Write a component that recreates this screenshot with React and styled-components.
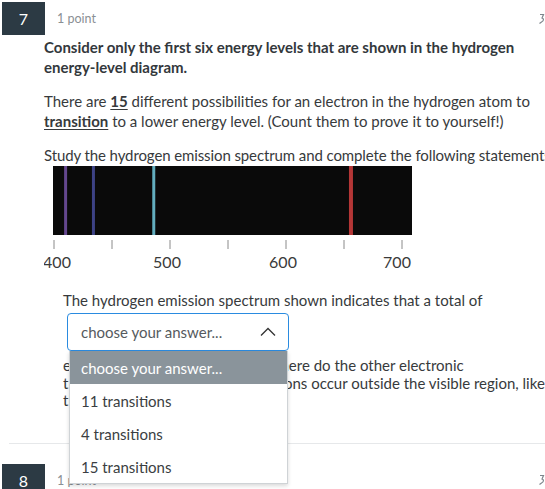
import React from "react";
import styled, { createGlobalStyle } from "styled-components";

const Global = createGlobalStyle`
  html, body {
    margin: 0;
    padding: 0;
    background: #fff;
    overflow: hidden;
  }
  body {
    font-family: Lato, "Open Sans", sans-serif;
    color: #373a3c;
  }
`;

const lines = [
  { nm: 410, color: "#6e4e9c", w: 3 },
  { nm: 434, color: "#434892", w: 3 },
  { nm: 486, color: "#6cbfd2", w: 3 },
  { nm: 656, color: "#c63b3b", w: 4 },
];

const options = ["choose your answer...", "11 transitions", "4 transitions", "15 transitions"];

export default function App() {
  return (
    <>
      <Global />
      <Page>
        <Question>
          <QHeader>
            <Badge>7</Badge>
            <Points>1 point</Points>
            <Flag />
          </QHeader>
          <QBody>
            <Lead>
              Consider only the first six energy levels that are shown in the hydrogen energy-level diagram.
            </Lead>
            <Para>
              There are <Key>15</Key> different possibilities for an electron in the hydrogen atom to{" "}
              <Key>transition</Key> to a lower energy level. (Count them to prove it to yourself!)
            </Para>
            <Para $nowrap>Study the hydrogen emission spectrum and complete the following statements.</Para>
            <Spectrum />
            <Answer>
              <Para>The hydrogen emission spectrum shown indicates that a total of</Para>
              <SelectWrap>
                <SelectBox>
                  <span>choose your answer...</span>
                  <svg width="16" height="10" viewBox="0 0 16 10">
                    <polyline points="1,8.5 8,1.5 15,8.5" fill="none" stroke="#333" strokeWidth="1.3" />
                  </svg>
                </SelectBox>
                <Menu>
                  {options.map((o, i) => (
                    <Option key={o} $active={i === 0}>{o}</Option>
                  ))}
                </Menu>
              </SelectWrap>
              <After>
                emission lines are observed, so where do the other electronic
                <br />
                transitions happen? These transitions occur outside the visible region, like
                <br />
                the infrared.
              </After>
            </Answer>
          </QBody>
        </Question>
        <Divider />
        <QHeader>
          <Badge>8</Badge>
          <Points>1 point</Points>
          <Flag />
        </QHeader>
      </Page>
    </>
  );
}

function Flag() {
  return (
    <FlagIcon width="8" height="14" viewBox="0 0 8 14">
      <path d="M3 2.5 L6.5 2.5 L5 6 C7 6.5 7 9 4.5 10 L2.5 11.5" fill="none" stroke="#7d858c" strokeWidth="1.2" />
    </FlagIcon>
  );
}

function Spectrum() {
  const x = (nm) => 10 + (nm - 400) * (348 / 300);
  const ticks = [400, 450, 500, 550, 600, 650, 700];
  const labels = [
    { t: "400", cx: 13 },
    { t: "500", cx: 123 },
    { t: "600", cx: 239 },
    { t: "700", cx: 353 },
  ];
  return (
    <SpectrumSvg width="380" height="106" viewBox="0 0 380 106">
      <rect x="9" y="0" width="359" height="69" fill="#0a0a0a" />
      {lines.map((l) => (
        <rect key={l.nm} x={x(l.nm) - l.w / 2} y="0" width={l.w} height="69" fill={l.color} opacity="0.9" />
      ))}
      {ticks.map((t) => (
        <line key={t} x1={x(t)} x2={x(t)} y1="74" y2="83" stroke="#8a8a8a" strokeWidth="1" />
      ))}
      {labels.map((l) => (
        <text key={l.t} x={l.cx} y="102" textAnchor="middle" fontSize="16" fill="#3a3a3a" fontFamily="Lato, sans-serif">
          {l.t}
        </text>
      ))}
    </SpectrumSvg>
  );
}

const Page = styled.div`
  width: 545px;
  padding: 2px 0 0 2px;
  box-sizing: border-box;
  overflow: hidden;
`;

const Question = styled.section`
  display: flex;
  flex-direction: column;
`;

const QHeader = styled.div`
  display: flex;
  align-items: center;
  height: 33px;
`;

const Badge = styled.div`
  width: 43px;
  height: 33px;
  background: #2c3a44;
  color: #fff;
  font-size: 16px;
  display: flex;
  align-items: center;
  justify-content: center;
`;

const Points = styled.span`
  margin-left: 12px;
  font-size: 12.5px;
  color: #8a8f94;
`;

const FlagIcon = styled.svg`
  margin-left: auto;
  flex: none;
`;

const QBody = styled.div`
  margin: 2px 0 0 42px;
  padding-right: 8px;
  font-size: 15px;
  line-height: 20px;
`;

const Lead = styled.p`
  margin: 0;
  font-weight: 700;
  color: #33383c;
`;

const Para = styled.p`
  margin: 14px 0 0;
  white-space: ${(p) => (p.$nowrap ? "nowrap" : "normal")};
  letter-spacing: ${(p) => (p.$nowrap ? "-0.007em" : "normal")};
`;

const Key = styled.b`
  text-decoration: underline;
  text-underline-offset: 2px;
`;

const SpectrumSvg = styled.svg`
  display: block;
  margin-top: 1px;
`;

const Answer = styled.div`
  padding-left: 19px;
  margin-top: 18px;

  & > p:first-child {
    margin: 0;
  }
`;

const SelectWrap = styled.div`
  position: relative;
  width: 222px;
  margin: 3px 0 0 4px;
`;

const SelectBox = styled.div`
  height: 38px;
  box-sizing: border-box;
  border: 1px solid #2a8be0;
  border-radius: 4px;
  display: flex;
  align-items: center;
  justify-content: space-between;
  padding: 0 12px 0 13px;
  color: #555a5e;
`;

const Menu = styled.ul`
  position: absolute;
  top: 100%;
  left: 2px;
  width: 219px;
  margin: 0;
  padding: 0;
  list-style: none;
  background: #fff;
  border: 1px solid #cfd3d6;
  border-top: none;
  box-sizing: border-box;
  box-shadow: 0 2px 4px rgba(0, 0, 0, 0.15);
  z-index: 5;
`;

const Option = styled.li`
  height: 33px;
  display: flex;
  align-items: center;
  padding-left: 11px;
  background: ${(p) => (p.$active ? "#8a949b" : "#fff")};
  color: ${(p) => (p.$active ? "#fff" : "#3a3e42")};
`;

const After = styled.p`
  margin: 6px 0 0;
  line-height: 17.5px;
  white-space: nowrap;
`;

const Divider = styled.hr`
  margin: 33px 0 20px 7px;
  border: none;
  border-top: 1px solid #e6e8ea;
`;
